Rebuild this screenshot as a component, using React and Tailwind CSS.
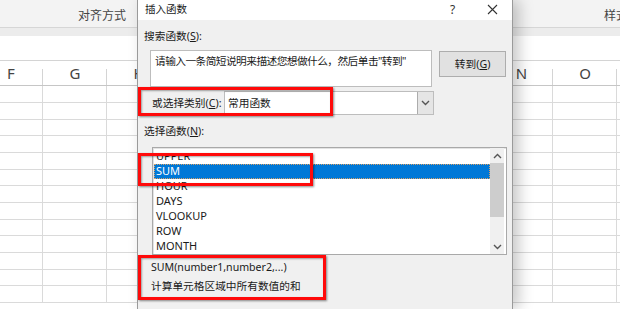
import React from "react";

const font = { fontFamily: '"Noto Sans", "Noto Sans CJK SC", sans-serif' };

const cols = [
  { l: "F", w: "w-[64px] -ml-[21px]" },
  { l: "G", w: "w-[64px]" },
  { l: "H", w: "w-[64px]" },
  { l: "I", w: "w-[64px]" },
  { l: "J", w: "w-[64px]" },
  { l: "K", w: "w-[64px]" },
  { l: "L", w: "w-[64px]" },
  { l: "M", w: "w-[63px]" },
  { l: "N", w: "w-[63px]" },
  { l: "O", w: "w-[64px]" },
  { l: "P", w: "w-[64px]" },
];

const rowHeights = ["h-[17px]", "h-[17px]", "h-[16px]", "h-[17px]", "h-[17px]", "h-[16px]", "h-[17px]", "h-[17px]", "h-[16px]", "h-[17px]", "h-[17px]", "h-[16px]", "h-[17px]"];

function Sheet() {
  return (
    <div className="flex flex-col w-[620px] h-[309px] bg-white">
      <div className="h-[27px] bg-[#f3f3f3] flex items-end pb-[2px] text-[12px] text-[#444] shrink-0 whitespace-nowrap">
        <span className="ml-[78px] shrink-0">对齐方式</span>
        <span className="ml-[478px] shrink-0">样式</span>
      </div>
      <div className="h-px bg-[#d6d6d6] shrink-0" />
      <div className="h-[8px] bg-[#ececec] shrink-0" />
      <div className="h-[24px] bg-white shrink-0" />
      <div className="h-px bg-[#d4d4d4] shrink-0" />
      <div className="flex h-[25px] shrink-0 border-b border-[#c6c6c6] bg-white">
        {cols.map((c) => (
          <div key={c.l} className={`${c.w} shrink-0 flex items-end justify-center pb-[1px] text-[15px] text-[#444] relative`}>
            {c.l}
            <div className="absolute right-0 top-[8px] bottom-0 w-px bg-[#d4d4d4]" />
          </div>
        ))}
      </div>
      {rowHeights.map((h, i) => (
        <div key={i} className={`flex ${h} shrink-0`}>
          {cols.map((c) => (
            <div key={c.l} className={`${c.w} shrink-0 border-r border-b border-[#dadada]`} />
          ))}
        </div>
      ))}
    </div>
  );
}

const items = ["UPPER", "SUM", "HOUR", "DAYS", "VLOOKUP", "ROW", "MONTH", "DATE"];

function Chevron({ up }) {
  return (
    <svg width="9" height="6" viewBox="0 0 9 6">
      <path d={up ? "M1 5 L4.5 1.5 L8 5" : "M1 1 L4.5 4.5 L8 1"} fill="none" stroke="#555" strokeWidth="1.4" />
    </svg>
  );
}

function Dialog() {
  return (
    <div className="absolute left-[137px] top-0 w-[376px] h-[309px] bg-[#f0f0f0] border-l border-r border-[#9a9a9a] shadow-[6px_0_14px_rgba(0,0,0,0.22)] text-[#1a1a1a] flex flex-col">
      <div className="h-[20px] bg-white flex items-center shrink-0 relative">
        <span className="ml-[7px] text-[10.5px]">插入函数</span>
        <span className="absolute left-[312px] top-[1px] text-[12px] text-[#333]">?</span>
        <svg className="absolute left-[349px] top-[4px]" width="11" height="11" viewBox="0 0 11 11">
          <path d="M1 1 L10 10 M10 1 L1 10" stroke="#333" strokeWidth="1.1" />
        </svg>
      </div>
      <div className="flex flex-col px-[6px]">
        <div className="mt-[9px] h-[15px] flex items-center text-[10.7px]">
          搜索函数(<span className="underline">S</span>):
        </div>
        <div className="flex mt-[6px]">
          <div className="ml-[6px] w-[283px] h-[37px] bg-white border border-[#bdbdbd] px-[4px] pt-[3px] text-[10.7px] leading-[14px] tracking-[-0.55px] whitespace-nowrap">
            请输入一条简短说明来描述您想做什么，然后单击"转到"
          </div>
          <div className="ml-[7px] mt-px w-[67px] h-[26px] bg-[#e1e1e1] border border-[#adadad] flex items-center justify-center text-[10.7px]">
            转到(<span className="underline">G</span>)
          </div>
        </div>
        <div className="flex mt-[4px] h-[24px] items-stretch">
          <div className="ml-[7px] w-[73px] flex items-center text-[10.7px] pl-[1px] whitespace-nowrap">
            或选择类别(<span className="underline">C</span>):
          </div>
          <div className="w-[210px] bg-white border border-[#bdbdbd] flex items-stretch">
            <div className="flex-1 flex items-center pl-[3px] text-[10.7px]">常用函数</div>
            <div className="w-[16px] bg-[#e5e5e5] border-l border-[#acacac] flex items-center justify-center">
              <Chevron />
            </div>
          </div>
        </div>
        <div className="mt-[9px] h-[15px] flex items-center text-[10.7px]">
          选择函数(<span className="underline">N</span>):
        </div>
        <div className="ml-[8px] mt-[8px] w-[355px] h-[108px] bg-white border border-[#a9a9a9] shadow-[inset_1px_1px_0_#e3e3e3] flex overflow-hidden">
          <div className="flex-1 flex flex-col pl-[1px] pt-[7px]">
            <div className="flex-1 overflow-hidden">
              <div className="flex flex-col -mt-[6px]">
                {items.map((it) => (
                  <div
                    key={it}
                    className={
                      it === "SUM"
                        ? "h-[15px] shrink-0 flex items-center pl-[1px] bg-[#0078d7] text-white border border-dotted border-[#d9a066] text-[11px]"
                        : "h-[15px] shrink-0 flex items-center pl-[2px] text-[11px]"
                    }
                  >
                    {it}
                  </div>
                ))}
              </div>
            </div>
          </div>
          <div className="w-[14px] mr-[2px] bg-[#f0f0f0] flex flex-col items-center shrink-0">
            <div className="h-[15px] flex items-center justify-center"><Chevron up /></div>
            <div className="w-full h-[54px] bg-[#cdcdcd]" />
            <div className="flex-1" />
            <div className="h-[15px] flex items-center justify-center"><Chevron /></div>
          </div>
        </div>
        <div className="ml-[7px] mt-[4px] h-[18px] flex items-center text-[10.6px]">SUM(number1,number2,...)</div>
        <div className="ml-[7px] h-[18px] flex items-center text-[10.7px]">计算单元格区域中所有数值的和</div>
      </div>
    </div>
  );
}

function RedBox({ cls }) {
  return <div className={`absolute border-[3px] border-[#ff0a0a] shadow-[1px_1px_2px_rgba(0,0,0,0.45),inset_1px_1px_2px_rgba(0,0,0,0.35)] ${cls}`} />;
}

export default function App() {
  return (
    <div className="relative w-[620px] h-[309px] overflow-hidden" style={font}>
      <Sheet />
      <Dialog />
      <RedBox cls="left-[138px] top-[87px] w-[195px] h-[29px]" />
      <RedBox cls="left-[138px] top-[153px] w-[175px] h-[33px]" />
      <RedBox cls="left-[138px] top-[255px] w-[188px] h-[45px]" />
    </div>
  );
}
